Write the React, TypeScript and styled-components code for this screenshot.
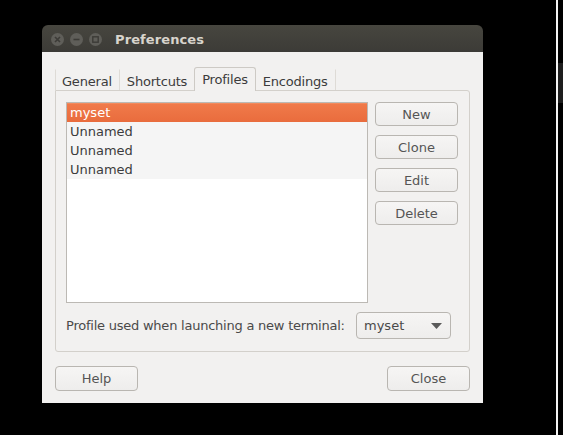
import React from "react";
import styled, { createGlobalStyle } from "styled-components";

const GlobalStyle = createGlobalStyle`
  html, body {
    margin: 0;
    padding: 0;
    background: #000;
  }
  body {
    font-family: "DejaVu Sans", "Noto Sans", sans-serif;
    font-size: 13px;
    color: #3c3c3c;
  }
`;

const Desktop = styled.div`
  width: 563px;
  height: 435px;
  display: flex;
  align-items: flex-start;
  padding-left: 42px;
  box-sizing: border-box;
  background: #000;
`;

const Window = styled.div`
  margin-top: 25px;
  width: 441px;
  display: flex;
  flex-direction: column;
`;

const TitleBar = styled.div`
  height: 27px;
  display: flex;
  align-items: center;
  padding-left: 9px;
  padding-top: 2px;
  box-sizing: border-box;
  border-radius: 6px 6px 0 0;
  background: linear-gradient(#47463f, #3c3b37);
`;

const WinButton = styled.div`
  width: 13px;
  height: 13px;
  border-radius: 50%;
  background: #5f5e59;
  margin-right: 6px;
  display: flex;
  align-items: center;
  justify-content: center;
`;

const Title = styled.div`
  margin-left: 7px;
  font-weight: bold;
  color: #d8d4cc;
  font-size: 13px;
  letter-spacing: 0.1px;
`;

const Body = styled.div`
  height: 351px;
  background: #f2f1f0;
  padding: 14px 13px 0;
  box-sizing: border-box;
  display: flex;
  flex-direction: column;
`;

const TabRow = styled.div`
  display: flex;
  align-items: flex-end;
  height: 24px;
`;

const Tab = styled.div<{ $active?: boolean }>`
  position: relative;
  z-index: ${(p) => (p.$active ? 2 : 1)};
  box-sizing: border-box;
  height: ${(p) => (p.$active ? "24px" : "21px")};
  margin-bottom: ${(p) => (p.$active ? "-1px" : "0")};
  margin-left: -1px;
  padding: 0 7px;
  display: flex;
  align-items: center;
  padding-top: ${(p) => (p.$active ? "0" : "2px")};
  border: 1px solid ${(p) => (p.$active ? "#cdcac5" : "#dedbd6")};
  border-bottom: none;
  border-top-color: ${(p) => (p.$active ? "#cdcac5" : "transparent")};
  border-radius: ${(p) => (p.$active ? "3px 3px 0 0" : "0")};
  background: #f2f1f0;
  color: #3c3c3c;
  letter-spacing: -0.2px;
  white-space: nowrap;
  &:first-child {
    margin-left: 0;
    padding-left: 6px;
  }
`;

const Frame = styled.div`
  height: 262px;
  box-sizing: border-box;
  border: 1px solid #d3d0cb;
  border-radius: 0 3px 3px 3px;
  padding: 11px 11px 0 10px;
  display: flex;
  flex-direction: column;
`;

const TopArea = styled.div`
  display: flex;
  gap: 7px;
`;

const List = styled.div`
  width: 302px;
  height: 201px;
  box-sizing: border-box;
  border: 1px solid #bcb9b4;
  background: #fff;
  display: flex;
  flex-direction: column;
`;

const Row = styled.div<{ $selected?: boolean }>`
  height: 19px;
  padding-left: 3px;
  padding-bottom: 1px;
  box-sizing: border-box;
  display: flex;
  align-items: center;
  color: ${(p) => (p.$selected ? "#fff" : "#3c3c3c")};
  background: ${(p) =>
    p.$selected
      ? "linear-gradient(#f59a70 0px, #f07a4a 1px, #e96c3d 100%)"
      : "#f5f5f5"};
`;

const ButtonColumn = styled.div`
  display: flex;
  flex-direction: column;
  gap: 9px;
`;

const Button = styled.div<{ $h?: number }>`
  width: 83px;
  height: ${(p) => p.$h ?? 24}px;
  box-sizing: border-box;
  border: 1px solid #b9b6b1;
  border-radius: 4px;
  background: linear-gradient(#f6f5f4, #eeedec);
  display: flex;
  align-items: center;
  justify-content: center;
  color: #555;
`;

const BottomRow = styled.div`
  margin-top: 9px;
  display: flex;
  align-items: center;
`;

const Label = styled.div`
  flex: 1;
  color: #4a4a4a;
  letter-spacing: -0.23px;
`;

const Combo = styled.div`
  width: 95px;
  height: 27px;
  margin-right: 7px;
  box-sizing: border-box;
  border: 1px solid #b9b6b1;
  border-radius: 4px;
  background: linear-gradient(#f6f5f4, #eeedec);
  display: flex;
  align-items: center;
  padding: 0 8px 0 7px;
  color: #4a4a4a;
  justify-content: space-between;
`;

const Footer = styled.div`
  margin-top: 14px;
  display: flex;
  justify-content: space-between;
`;

const Edge = styled.div`
  margin-left: auto;
  height: 435px;
  display: flex;
  align-items: flex-start;
`;

const Strip = styled.div`
  width: 2px;
  height: 435px;
  background: #f4f4f4;
`;

const EdgePatch = styled.div`
  margin-top: 63px;
  width: 5px;
  height: 40px;
  background: #1e1e1e;
`;

const CloseGlyph = () => (
  <svg width="7" height="7" viewBox="0 0 7 7">
    <path d="M1 1L6 6M6 1L1 6" stroke="#3c3b37" strokeWidth="1.6" />
  </svg>
);
const MinGlyph = () => (
  <svg width="7" height="7" viewBox="0 0 7 7">
    <path d="M0.5 3.5H6.5" stroke="#3c3b37" strokeWidth="1.6" />
  </svg>
);
const MaxGlyph = () => (
  <svg width="7" height="7" viewBox="0 0 7 7">
    <rect x="0.8" y="0.8" width="5.4" height="5.4" fill="none" stroke="#3c3b37" strokeWidth="1.4" />
  </svg>
);

const Arrow = () => (
  <svg width="11" height="6" viewBox="0 0 11 6">
    <path d="M0 0H11L5.5 6Z" fill="#5a5a5a" />
  </svg>
);

const tabs = ["General", "Shortcuts", "Profiles", "Encodings"];
const profiles = ["myset", "Unnamed", "Unnamed", "Unnamed"];
const actions = ["New", "Clone", "Edit", "Delete"];

const App = () => {
  return (
    <>
      <GlobalStyle />
      <Desktop>
        <Window>
          <TitleBar>
            <WinButton>
              <CloseGlyph />
            </WinButton>
            <WinButton>
              <MinGlyph />
            </WinButton>
            <WinButton>
              <MaxGlyph />
            </WinButton>
            <Title>Preferences</Title>
          </TitleBar>
          <Body>
            <TabRow>
              {tabs.map((t) => (
                <Tab key={t} $active={t === "Profiles"}>
                  {t}
                </Tab>
              ))}
            </TabRow>
            <Frame>
              <TopArea>
                <List>
                  {profiles.map((p, i) => (
                    <Row key={i} $selected={i === 0}>
                      {p}
                    </Row>
                  ))}
                </List>
                <ButtonColumn>
                  {actions.map((a) => (
                    <Button key={a}>{a}</Button>
                  ))}
                </ButtonColumn>
              </TopArea>
              <BottomRow>
                <Label>Profile used when launching a new terminal:</Label>
                <Combo>
                  myset
                  <Arrow />
                </Combo>
              </BottomRow>
            </Frame>
            <Footer>
              <Button $h={25}>Help</Button>
              <Button $h={25}>Close</Button>
            </Footer>
          </Body>
        </Window>
        <Edge>
          <Strip />
          <EdgePatch />
        </Edge>
      </Desktop>
    </>
  );
};

export default App;
